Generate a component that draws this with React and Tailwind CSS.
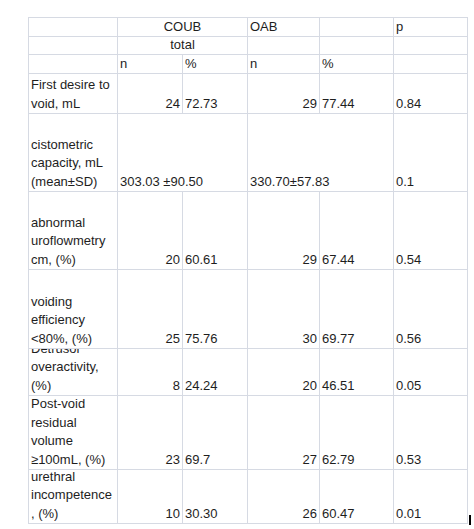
import React from "react";

const cell = "bg-white flex flex-col justify-end overflow-hidden px-[2px] whitespace-nowrap";

function L({ lines }) {
  return (
    <div className={cell}>
      {lines.map((t, i) => (
        <div key={i}>{t}</div>
      ))}
    </div>
  );
}

function N({ v }) {
  return <div className={cell + " items-end"}>{v}</div>;
}

function T({ v, span }) {
  return <div className={cell + (span ? " col-span-2" : "")}>{v}</div>;
}

const rows = [
  [["First desire to", "void, mL"], "24", "72.73", "29", "77.44", "0.84"],
  [["abnormal", "uroflowmetry", "cm, (%)"], "20", "60.61", "29", "67.44", "0.54"],
  [["voiding", "efficiency", "<80%, (%)"], "25", "75.76", "30", "69.77", "0.56"],
  [["Detrusor", "overactivity,", "(%)"], "8", "24.24", "20", "46.51", "0.05"],
  [["Post-void", "residual", "volume", "≥100mL, (%)"], "23", "69.7", "27", "62.79", "0.53"],
  [["urethral", "incompetence", ", (%)"], "10", "30.30", "26", "60.47", "0.01"],
];

function Row({ r }) {
  return (
    <>
      <L lines={r[0]} />
      <N v={r[1]} />
      <T v={r[2]} />
      <N v={r[3]} />
      <T v={r[4]} />
      <T v={r[5]} />
    </>
  );
}

export default function App() {
  return (
    <div className="bg-white w-[474px] h-[529px] pl-[28px] pt-[17px] font-['Liberation_Sans',Arial,sans-serif] text-[13px] leading-[18.5px] text-[#1e1e1e]">
      <div className="flex items-end">
        <div className="grid w-fit grid-cols-[88px_64px_64px_71px_73px_73px] grid-rows-[18px_17px_18px_39px_77px_77px_78px_46px_73px_53px] gap-px bg-[#d6dae3] p-px">
          {/* header row 1 */}
          <div className={cell}></div>
          <div className={cell + " col-span-2 items-center"}>COUB</div>
          <T v="OAB" />
          <T v="" />
          <T v="p" />
          {/* header row 2 */}
          <div className={cell}></div>
          <div className={cell + " col-span-2 items-center"}>total</div>
          <T v="" />
          <T v="" />
          <T v="" />
          {/* header row 3 */}
          <div className={cell}></div>
          <T v="n" />
          <T v="%" />
          <T v="n" />
          <T v="%" />
          <T v="" />
          {/* data */}
          <Row r={rows[0]} />
          <L lines={["cistometric", "capacity, mL", "(mean±SD)"]} />
          <T v="303.03 ±90.50" span />
          <T v="330.70±57.83" span />
          <T v="0.1" />
          <Row r={rows[1]} />
          <Row r={rows[2]} />
          <Row r={rows[3]} />
          <Row r={rows[4]} />
          <Row r={rows[5]} />
        </div>
        <div className="ml-[1px] mb-[-1px] w-[2px] h-[10px] bg-black"></div>
      </div>
    </div>
  );
}
